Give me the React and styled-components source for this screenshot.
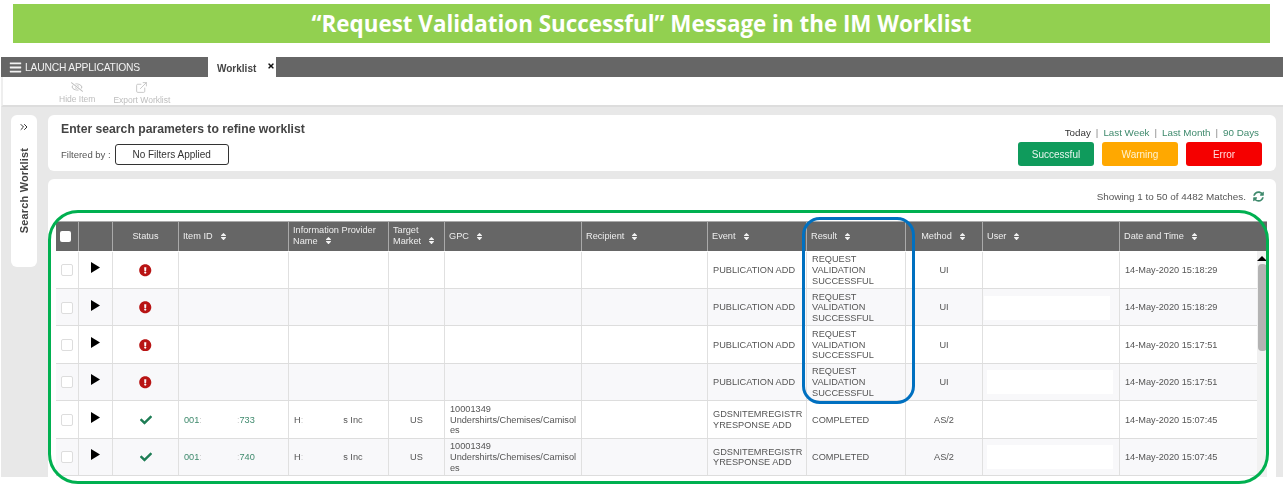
import React from "react";
import styled, { createGlobalStyle } from "styled-components";
import {
  FaBars,
  FaTimes,
  FaRegEyeSlash,
  FaSort,
  FaExclamationCircle,
  FaCheck,
  FaSyncAlt,
} from "react-icons/fa";
import { ChevronsRight, ExternalLink } from "lucide-react";

const GlobalStyle = createGlobalStyle`
  html, body {
    margin: 0;
    padding: 0;
    background: #fff;
    overflow: hidden;
  }
  body {
    font-family: "Liberation Sans", Arial, sans-serif;
  }
`;

const COLUMNS = "23px 34px 66px 110px 100px 56px 137px 126px 99px 99px 77px 137px";

const headers = [
  { key: "check" },
  { key: "expand" },
  { key: "status", label: "Status", center: true },
  { key: "item", label: "Item ID", sort: true },
  { key: "provider", label: "Information Provider", label2: "Name", sort: true },
  { key: "market", label: "Target", label2: "Market", sort: true },
  { key: "gpc", label: "GPC", sort: true },
  { key: "recipient", label: "Recipient", sort: true },
  { key: "event", label: "Event", sort: true },
  { key: "result", label: "Result", sort: true },
  { key: "method", label: "Method", sort: true, center: true },
  { key: "user", label: "User", sort: true },
  { key: "date", label: "Date and Time", sort: true, last: true },
];

const PENDING = "REQUEST\nVALIDATION\nSUCCESSFUL";
const GPC_TEXT = "10001349\nUndershirts/Chemises/Camisol\nes";
const EVENT_TEXT = "GDSNITEMREGISTR\nYRESPONSE ADD";

const rows = [
  { ok: false, event: "PUBLICATION ADD", result: PENDING, method: "UI", date: "14-May-2020 15:18:29" },
  { ok: false, event: "PUBLICATION ADD", result: PENDING, method: "UI", date: "14-May-2020 15:18:29", mask: -4 },
  { ok: false, event: "PUBLICATION ADD", result: PENDING, method: "UI", date: "14-May-2020 15:17:51" },
  { ok: false, event: "PUBLICATION ADD", result: PENDING, method: "UI", date: "14-May-2020 15:17:51", mask: -1 },
  { ok: true, idEnd: "733", event: EVENT_TEXT, result: "COMPLETED", method: "AS/2", date: "14-May-2020 15:07:45" },
  { ok: true, idEnd: "740", event: EVENT_TEXT, result: "COMPLETED", method: "AS/2", date: "14-May-2020 15:07:45", mask: -1 },
];

const Page = styled.div`
  position: relative;
  width: 1283px;
  height: 485px;
  overflow: hidden;
  background: #fff;
`;

const Banner = styled.div`
  margin: 4px 13px 14px;
  height: 39px;
  background: #92d050;
  color: #fff;
  font-family: "Open Sans", sans-serif;
  font-size: 22.4px;
  font-weight: 700;
  display: flex;
  align-items: center;
  justify-content: center;
`;

const AppFrame = styled.div`
  margin-left: 1px;
  filter: blur(0.3px);
`;

const AppBar = styled.div`
  height: 20px;
  background: #666;
  display: flex;
  color: #fff;
`;

const LaunchButton = styled.div`
  width: 207px;
  display: flex;
  align-items: center;
  gap: 3px;
  padding-left: 8px;
  box-sizing: border-box;
  font-size: 10.3px;
  letter-spacing: -0.2px;
  color: #f2f2f2;
`;

const Tab = styled.div`
  width: 68px;
  background: #fff;
  color: #444;
  font-size: 10px;
  font-weight: bold;
  display: flex;
  align-items: center;
  padding: 3px 0 0 9px;
  box-sizing: border-box;
  gap: 11px;

  svg {
    color: #111;
    margin-top: -5px;
  }
`;

const Toolbar = styled.div`
  height: 28px;
  background: #fff;
  border-bottom: 2px solid #ddd;
  border-left: 2px solid #eee;
  display: flex;
  padding-left: 56px;
  gap: 18px;
`;

const ToolItem = styled.div`
  display: flex;
  flex-direction: column;
  align-items: center;
  padding-top: 4px;
  gap: 1px;
  font-size: 8.5px;
  color: #bdbdbd;
`;

const Workspace = styled.div`
  background: #e8e8e8;
  height: 370px;
  box-sizing: border-box;
  padding: 8px 7px 0 10px;
  display: flex;
  gap: 11px;
`;

const SidePanel = styled.div`
  width: 26px;
  height: 152px;
  flex: none;
  background: #fff;
  border-radius: 6px;
  display: flex;
  flex-direction: column;
  align-items: center;
  padding-top: 6px;
  box-sizing: border-box;
  gap: 15px;
  color: #333;
`;

const SideLabel = styled.div`
  writing-mode: vertical-rl;
  transform: rotate(180deg);
  font-size: 10.9px;
  font-weight: bold;
  letter-spacing: 0.2px;
  color: #444;
  margin-right: 1px;
`;

const Main = styled.div`
  flex: 1;
  display: flex;
  flex-direction: column;
  gap: 8px;
  min-width: 0;
`;

const FilterCard = styled.div`
  height: 56px;
  background: #fff;
  border-radius: 6px;
  padding: 7px 13px 0;
  box-sizing: border-box;
  display: flex;
  justify-content: space-between;
`;

const FilterTitle = styled.div`
  font-size: 12.2px;
  font-weight: bold;
  color: #444;
`;

const FilterRow = styled.div`
  display: flex;
  align-items: center;
  gap: 4px;
  margin-top: 8px;
  font-size: 9.5px;
  color: #555;
`;

const FilterPill = styled.div`
  width: 114px;
  height: 21px;
  box-sizing: border-box;
  border: 1px solid #333;
  border-radius: 3px;
  color: #333;
  font-size: 10px;
  display: flex;
  align-items: center;
  justify-content: center;
`;

const RangeColumn = styled.div`
  display: flex;
  flex-direction: column;
  align-items: flex-end;
  margin-right: 1px;
  padding-top: 5px;
`;

const RangeLinks = styled.div`
  font-size: 9.8px;
  color: #888;
  margin-right: 3px;
  display: flex;
  gap: 5px;
`;

const RangeLink = styled.span`
  color: ${(p) => (p.$active ? "#333" : "#3f8a6d")};
`;

const StatusButtons = styled.div`
  display: flex;
  gap: 8px;
  margin-top: 4px;
`;

const StatusButton = styled.div`
  width: 76px;
  height: 24px;
  border-radius: 3px;
  background: ${(p) => p.$bg};
  color: ${(p) => p.$fg || "#e8f5ee"};
  font-size: 10px;
  display: flex;
  align-items: center;
  justify-content: center;
`;

const TableCard = styled.div`
  flex: 1;
  background: #fff;
  border-radius: 6px 6px 0 0;
  padding: 0 8px;
  display: flex;
  flex-direction: column;
  min-height: 0;
  overflow: hidden;
`;

const MatchBar = styled.div`
  height: 42px;
  flex: none;
  display: flex;
  align-items: flex-start;
  justify-content: flex-end;
  gap: 7px;
  padding: 12px 4px 0 0;
  box-sizing: border-box;
  font-size: 9.9px;
  color: #555;

  svg {
    color: #3f8a6d;
  }
`;

const HeaderRow = styled.div`
  display: grid;
  grid-template-columns: ${COLUMNS} 1fr;
  height: 30px;
  flex: none;
  background: #666;
  box-shadow: inset 0 1px 0 #aaa;
  width: 1211px;
`;

const HeaderCell = styled.div`
  display: flex;
  align-items: center;
  justify-content: ${(p) => (p.$center ? "center" : "flex-start")};
  padding-left: ${(p) => (p.$center ? 0 : 4)}px;
  border-right: ${(p) => (p.$last ? "none" : "1px solid #aaa")};
  box-sizing: border-box;
  color: #eee;
  font-size: 9.2px;
  line-height: 10.7px;
  min-width: 0;
`;

const SortIcon = styled(FaSort)`
  font-size: 9px;
  margin-left: 6px;
  vertical-align: -1px;
  color: #f2f2f2;
`;

const HeaderBox = styled.span`
  width: 11px;
  height: 11px;
  background: #fff;
  border-radius: 2px;
`;

const TableBody = styled.div`
  display: flex;
  flex: 1;
  min-height: 0;
  width: 1211px;
`;

const RowList = styled.div`
  width: 1201px;
  flex: none;
  padding-top: 0.6px;
`;

const Row = styled.div`
  display: grid;
  grid-template-columns: ${COLUMNS} 1fr;
  height: 37.4px;
  background: ${(p) => (p.$alt ? "#f8f8fa" : "#fff")};
  border-bottom: 1px solid #ddd;
  box-sizing: border-box;
`;

const Cell = styled.div`
  display: flex;
  align-items: center;
  justify-content: ${(p) => (p.$center ? "center" : "flex-start")};
  padding-left: ${(p) => (p.$center ? 0 : 5)}px;
  padding-top: 1px;
  border-right: ${(p) => (p.$last ? "none" : "1px solid #e0e0e0")};
  box-sizing: border-box;
  color: #555;
  font-size: 9.2px;
  line-height: 10.7px;
  white-space: pre-line;
  min-width: 0;
  overflow: hidden;
`;

const RowBox = styled.span`
  width: 10px;
  height: 10px;
  border: 1px solid #ddd;
  border-radius: 2px;
  background: #fff;
`;

const Caret = styled.svg`
  width: 9px;
  height: 11px;
  margin-top: -5px;
  display: block;
`;

const ErrorIcon = styled(FaExclamationCircle)`
  font-size: 12.5px;
  color: #b81414;
`;

const CheckIcon = styled(FaCheck)`
  font-size: 12px;
  color: #1e7d55;
`;

const ItemLink = styled.span`
  color: #3f8a6d;
  display: flex;
  gap: 35px;
`;

const ProviderText = styled.span`
  display: flex;
  gap: 40px;
`;

const FadedText = styled.span`
  color: #ccc;
`;

const UserMask = styled.span`
  width: 126px;
  height: 24px;
  background: #fff;
  margin-left: ${(p) => p.$shift}px;
`;

const ScrollTrack = styled.div`
  width: 10px;
  flex: none;
  background: #f1f1f1;
  display: flex;
  flex-direction: column;
  align-items: center;
`;

const ScrollArrow = styled.div`
  width: 0;
  height: 0;
  margin: 5px 0 3px;
  border-left: 5px solid transparent;
  border-right: 5px solid transparent;
  border-bottom: 5px solid #000;
`;

const ScrollThumb = styled.div`
  width: 9px;
  height: 87px;
  border-radius: 4px;
  background: #b3b3b3;
`;

const Callout = styled.div`
  position: absolute;
  box-sizing: border-box;
  pointer-events: none;
  left: ${(p) => p.$x}px;
  top: ${(p) => p.$y}px;
  width: ${(p) => p.$w}px;
  height: ${(p) => p.$h}px;
  border: 3px solid ${(p) => p.$color};
  border-radius: ${(p) => p.$radius}px;
`;

const Sortable = ({ text, text2 }) =>
  text2 ? (
    <span>
      {text}
      <br />
      {text2}
      <SortIcon />
    </span>
  ) : (
    <>
      {text}
      <SortIcon />
    </>
  );

const App = () => {
  return (
    <Page>
      <GlobalStyle />
      <Banner>“Request Validation Successful” Message in the IM Worklist</Banner>
      <AppFrame>
        <AppBar>
          <LaunchButton>
            <FaBars size={13} />
            LAUNCH APPLICATIONS
          </LaunchButton>
          <Tab>
            Worklist
            <FaTimes size={8} />
          </Tab>
        </AppBar>
        <Toolbar>
          <ToolItem>
            <FaRegEyeSlash size={12} />
            Hide Item
          </ToolItem>
          <ToolItem>
            <ExternalLink size={13} strokeWidth={1.5} />
            Export Worklist
          </ToolItem>
        </Toolbar>
        <Workspace>
          <SidePanel>
            <ChevronsRight size={12} strokeWidth={2} />
            <SideLabel>Search Worklist</SideLabel>
          </SidePanel>
          <Main>
            <FilterCard>
              <div>
                <FilterTitle>Enter search parameters to refine worklist</FilterTitle>
                <FilterRow>
                  Filtered by :<FilterPill>No Filters Applied</FilterPill>
                </FilterRow>
              </div>
              <RangeColumn>
                <RangeLinks>
                  <RangeLink $active>Today</RangeLink>|<RangeLink>Last Week</RangeLink>|
                  <RangeLink>Last Month</RangeLink>|<RangeLink>90 Days</RangeLink>
                </RangeLinks>
                <StatusButtons>
                  <StatusButton $bg="#0f9b5c">Successful</StatusButton>
                  <StatusButton $bg="#ffa800" $fg="#fff3d0">Warning</StatusButton>
                  <StatusButton $bg="#f50000" $fg="#ffdcdc">Error</StatusButton>
                </StatusButtons>
              </RangeColumn>
            </FilterCard>
            <TableCard>
              <MatchBar>
                Showing 1 to 50 of 4482 Matches.
                <FaSyncAlt size={11} />
              </MatchBar>
              <HeaderRow>
                {headers.map((h) => (
                  <HeaderCell key={h.key} $center={h.center} $last={h.last}>
                    {h.key === "check" && <HeaderBox />}
                    {h.sort ? <Sortable text={h.label} text2={h.label2} /> : h.label}
                  </HeaderCell>
                ))}
              </HeaderRow>
              <TableBody>
                <RowList>
                  {rows.map((row, i) => (
                    <Row key={i} $alt={i % 2 === 1}>
                      <Cell $center>
                        <RowBox />
                      </Cell>
                      <Cell $center>
                        <Caret viewBox="0 0 9 11">
                          <polygon points="0,0 9,5.5 0,11" fill="#000" />
                        </Caret>
                      </Cell>
                      <Cell $center>{row.ok ? <CheckIcon /> : <ErrorIcon />}</Cell>
                      <Cell>
                        {row.ok && (
                          <ItemLink>
                            <span>
                              001<FadedText>:</FadedText>
                            </span>
                            <span>
                              <FadedText>:</FadedText>
                              {row.idEnd}
                            </span>
                          </ItemLink>
                        )}
                      </Cell>
                      <Cell>
                        {row.ok && (
                          <ProviderText>
                            <span>
                              H<FadedText>:</FadedText>
                            </span>
                            <span>s Inc</span>
                          </ProviderText>
                        )}
                      </Cell>
                      <Cell $center>{row.ok && "US"}</Cell>
                      <Cell>{row.ok && GPC_TEXT}</Cell>
                      <Cell />
                      <Cell>{row.event}</Cell>
                      <Cell>{row.result}</Cell>
                      <Cell $center>{row.method}</Cell>
                      <Cell>{row.mask && <UserMask $shift={row.mask} />}</Cell>
                      <Cell $last>{row.date}</Cell>
                    </Row>
                  ))}
                </RowList>
                <ScrollTrack>
                  <ScrollArrow />
                  <ScrollThumb />
                </ScrollTrack>
              </TableBody>
            </TableCard>
          </Main>
        </Workspace>
      </AppFrame>
      <Callout $x={48} $y={210} $w={1221} $h={274} $color="#00b050" $radius={30} />
      <Callout $x={802} $y={217} $w={113} $h={187} $color="#0070c0" $radius={18} />
    </Page>
  );
};

export default App;
